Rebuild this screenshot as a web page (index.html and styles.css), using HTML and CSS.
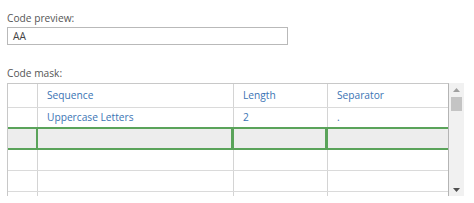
FILE: index.html
```html
<!DOCTYPE html>
<html lang="en">
<head>
    <meta charset="UTF-8">
    <title>Code mask</title>
    <link rel="stylesheet" href="styles.css">
</head>
<body>
    <div class="panel">
        <label class="field-label">Code preview:</label>
        <div class="preview-box">AA</div>

        <label class="field-label mask-label">Code mask:</label>
        <div class="grid-wrap">
            <div class="grid">
                <div class="row header">
                    <div class="cell"></div>
                    <div class="cell">Sequence</div>
                    <div class="cell">Length</div>
                    <div class="cell">Separator</div>
                </div>
                <div class="row no-line">
                    <div class="cell"></div>
                    <div class="cell">Uppercase Letters</div>
                    <div class="cell">2</div>
                    <div class="cell">.</div>
                </div>
                <div class="row selected">
                    <div class="cell"></div>
                    <div class="cell"></div>
                    <div class="cell"></div>
                    <div class="cell"></div>
                </div>
                <div class="row">
                    <div class="cell"></div>
                    <div class="cell"></div>
                    <div class="cell"></div>
                    <div class="cell"></div>
                </div>
                <div class="row">
                    <div class="cell"></div>
                    <div class="cell"></div>
                    <div class="cell"></div>
                    <div class="cell"></div>
                </div>
                <div class="row">
                    <div class="cell"></div>
                    <div class="cell"></div>
                    <div class="cell"></div>
                    <div class="cell"></div>
                </div>
            </div>
            <div class="scrollbar">
                <svg class="arrow" width="7" height="4" viewBox="0 0 7 4"><path d="M0 4 L3.5 0 L7 4 Z" fill="#a0a0a0"/></svg>
                <div class="thumb"></div>
                <div class="track"></div>
                <svg class="arrow" width="7" height="4" viewBox="0 0 7 4"><path d="M0 0 L3.5 4 L7 0 Z" fill="#505050"/></svg>
            </div>
        </div>
    </div>
</body>
</html>
```

FILE: styles.css
```css
* {
    margin: 0;
    padding: 0;
    box-sizing: border-box;
}

body {
    font-family: 'Open Sans', 'Segoe UI', sans-serif;
    font-size: 10.2px;
    background: white;
    color: #505050;
}

.panel {
    padding: 11px 0 0 7px;
    width: 474px;
    height: 203px;
    overflow: hidden;
}

.field-label {
    display: block;
    line-height: 15px;
    color: #555;
}

.preview-box {
    margin-top: 1px;
    width: 281px;
    height: 18px;
    border: 1px solid #b9b9b9;
    padding-left: 5px;
    line-height: 16px;
    color: #444;
}

.mask-label {
    margin-top: 21px;
}

.grid-wrap {
    margin-top: 2px;
    display: flex;
    height: 113px;
    overflow: hidden;
}

.grid {
    width: 442px;
    border: 1px solid #c8c8c8;
    border-right: 1px solid #b4b4b4;
    border-bottom: none;
}

.row {
    display: grid;
    grid-template-columns: 30px 196px 94px 120px;
    height: 21px;
    border-bottom: 1px solid #dadada;
}

.row .cell {
    border-right: 1px solid #d4d4d4;
    padding-left: 9px;
    line-height: 20px;
    color: #3b74b4;
}

.row .cell:last-child {
    border-right: none;
}

.row.header {
    height: 24px;
}

.row.header .cell {
    line-height: 23px;
}

.row.no-line {
    height: 19px;
    border-bottom: none;
}

.row.no-line .cell {
    line-height: 19px;
}

.row.selected {
    height: 23px;
    background: #ededed;
    border-top: 2px solid #5aa35a;
    border-bottom: 2px solid #5aa35a;
}

.row.selected .cell {
    border-right: 3px solid #5aa35a;
}

.row.selected .cell:first-child {
    border-right: 2px solid #5aa35a;
}

.row.selected .cell:last-child {
    border-right: none;
}

.scrollbar {
    width: 15px;
    background: #f1f1f1;
    display: flex;
    flex-direction: column;
    align-items: center;
    padding: 5px 0 4px;
}

.thumb {
    margin-top: 5px;
    width: 11px;
    height: 14px;
    background: #c4c4c4;
}

.track {
    flex: 1;
}
```
